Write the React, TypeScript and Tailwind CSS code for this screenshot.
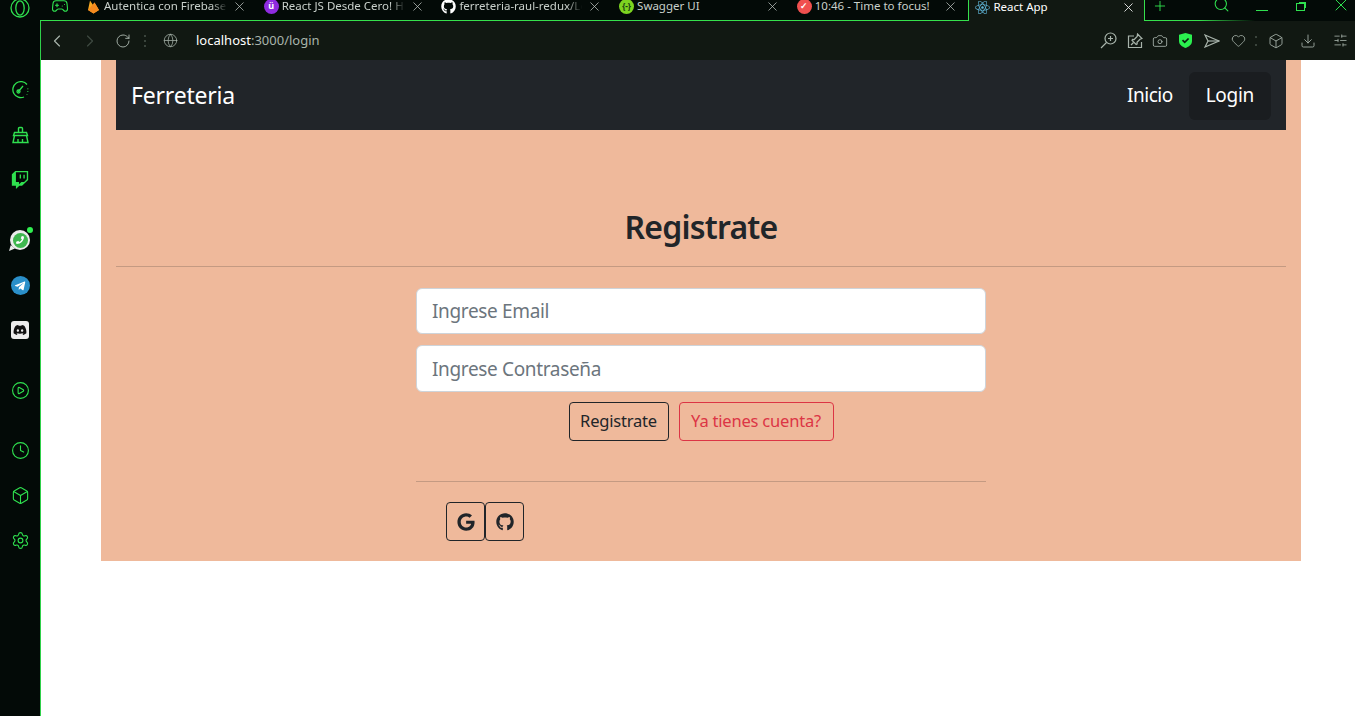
import type { ReactNode } from "react";
import { FaDiscord, FaGithub, FaGoogle, FaPhoneAlt, FaReact, FaTelegramPlane, FaTwitch } from "react-icons/fa";
import {
  Box,
  Camera,
  ChevronLeft,
  ChevronRight,
  CirclePlay,
  Clock,
  Download,
  Gamepad2,
  Globe,
  Heart,
  Plus,
  RotateCw,
  Search,
  Settings,
  SlidersHorizontal,
  X,
} from "lucide-react";

const OperaLogo = () => (
  <svg width="20" height="20" viewBox="0 0 20 20" fill="none" stroke="#2fe04f" strokeWidth="1.3">
    <circle cx="10" cy="10" r="9" />
    <ellipse cx="10" cy="10" rx="4.2" ry="7.2" />
  </svg>
);

const GaugeIcon = () => (
  <svg width="18" height="18" viewBox="0 0 18 18" fill="none" stroke="#2fe04f" strokeWidth="1.3">
    <path d="M16 3.500A8 8 0 1 0 13 16" />
    <path d="M7 11 12 5" />
    <circle cx="7.500" cy="10.500" r="1.500" />
    <path d="M16.800 7.500v.8M16.800 10v.8M16 13v.6" />
  </svg>
);

const BroomIcon = () => (
  <svg width="17" height="18" viewBox="0 0 17 18" fill="none" stroke="#2fe04f" strokeWidth="1.4">
    <path d="M6.500 6V2.500a1 1 0 0 1 1-1h2a1 1 0 0 1 1 1V6" />
    <path d="M2.500 6.500h12l1 3H1.500z" />
    <path d="M2.500 9.500 1 16.500h15l-1.500-7" />
    <path d="M6 16v-3M10.500 16v-3" />
  </svg>
);

const ZoomGlyph = () => (
  <svg width="17" height="17" viewBox="0 0 17 17" fill="none" stroke="currentColor" strokeWidth="1.2">
    <circle cx="10.500" cy="6.500" r="5.500" />
    <path d="M6.500 10.500 1 16M10.500 4v5M8 6.500h5" />
  </svg>
);

const PinGlyph = () => (
  <svg width="16" height="16" viewBox="0 0 16 16" fill="none" stroke="currentColor" strokeWidth="1.2">
    <path d="M7 3H1.500v11.500H14.500V9" />
    <path d="M10.500 1 15 5.500l-2 .8-3 3 .2 1.700-1 .5L5 7.300l.5-1 1.700.2 3-3z" />
    <path d="M6.500 9.500 4 12" />
  </svg>
);

const SendGlyph = () => (
  <svg width="16" height="14" viewBox="0 0 16 14" fill="none" stroke="currentColor" strokeWidth="1.2">
    <path d="M1 1 15 7 1 13 4 7z" />
    <path d="M4 7h11" />
  </svg>
);

const Shield = () => (
  <svg width="13" height="15" viewBox="0 0 13 15">
    <path d="M6.500 0 13 1.800V8c0 3.500-3 5.700-6.500 7C3 13.700 0 11.500 0 8V1.800z" fill="#2bf04f" />
    <path d="M3.500 7.200 5.700 9.400 9.600 5.500" fill="none" stroke="#0c1a10" strokeWidth="1.700" />
  </svg>
);

const FirebaseFlame = () => (
  <svg width="13" height="15" viewBox="0 0 13 15" className="shrink-0 mx-[1px]">
    <path d="M1 11 3 1.500 6 6 7.500 3.500 12 11 6.500 14.500z" fill="#f6a821" />
    <path d="M1 11 7.500 3.500 12 11 6.500 14.500z" fill="#f58a1f" />
  </svg>
);

const TabGlyph = ({ color, children }: { color: string; children: ReactNode }) => (
  <span className="w-[15px] h-[15px] rounded-full flex items-center justify-center text-white text-[9px] font-bold shrink-0" style={{ background: color }}>
    {children}
  </span>
);

const tabs = [
  { title: "Autentica con Firebase", fade: true, icon: <FirebaseFlame /> },
  { title: "React JS Desde Cero! H", fade: true, icon: <TabGlyph color="#8f2be0">ü</TabGlyph> },
  { title: "ferreteria-raul-redux/Lo", fade: true, icon: <FaGithub size={15} color="#ffffff" className="shrink-0" /> },
  { title: "Swagger UI", fade: false, icon: <TabGlyph color="#7dd420"><span className="text-[#173a10] text-[8px]">{"{-}"}</span></TabGlyph> },
  { title: "10:46 - Time to focus!", fade: false, icon: <TabGlyph color="#f0504f">✓</TabGlyph> },
];

export default function App() {
  return (
    <div className="flex h-[716px] w-[1355px] overflow-hidden bg-white font-['Noto_Sans',sans-serif]">
      {/* side panel */}
      <aside className="w-[40px] shrink-0 bg-[#030a07] flex flex-col items-center text-[#2fe04f]">
        <div className="mt-[-2px]">
          <OperaLogo />
        </div>
        <div className="mt-[63px] h-[18px]"><GaugeIcon /></div>
        <div className="mt-[27px]"><BroomIcon /></div>
        <div className="mt-[27px] h-[18px]"><FaTwitch size={18} color="#2fe04f" /></div>
        <div className="relative mt-[41px] flex h-[20px] w-[20px] items-center justify-center rounded-full bg-[#ececec]">
          <span className="absolute bottom-[-1px] left-[-1px] h-[6px] w-[6px] bg-[#ececec] [clip-path:polygon(0_100%,30%_0,100%_60%)]" />
          <span className="flex h-[15px] w-[15px] items-center justify-center rounded-full bg-[#3fb74f]">
            <FaPhoneAlt size={8} color="#ffffff" className="-scale-x-100" />
          </span>
          <span className="absolute right-[-3px] top-[-3px] h-[6px] w-[6px] rounded-full bg-[#30f050]" />
        </div>
        <div className="mt-[26px] flex h-[19px] w-[19px] items-center justify-center rounded-full bg-[#2a8fc9]">
          <FaTelegramPlane size={12} color="#ffffff" />
        </div>
        <div className="mt-[26px] flex h-[18px] w-[18px] items-center justify-center rounded-[3px] bg-[#ececec]">
          <FaDiscord size={14} color="#111111" />
        </div>
        <div className="mt-[42px]"><CirclePlay size={19} strokeWidth={1.4} /></div>
        <div className="mt-[41px]"><Clock size={19} strokeWidth={1.4} /></div>
        <div className="mt-[26px]"><Box size={19} strokeWidth={1.4} /></div>
        <div className="mt-[26px]"><Settings size={19} strokeWidth={1.4} /></div>
      </aside>

      <div className="flex-1 min-w-0 flex flex-col">
        {/* tab strip */}
        <div className="h-[21px] shrink-0 bg-[#030a07] flex items-stretch">
          <div className="flex flex-1 items-start border-b border-r border-[#35e04c] relative">
            <div className="w-[40px] shrink-0 flex justify-center pl-[-2px] mt-[-3px] text-[#2fe04f]">
              <Gamepad2 size={18} strokeWidth={1.5} />
            </div>
            {tabs.map((tab) => (
              <div key={tab.title} className="w-[177.7px] shrink-0 h-[14px] flex items-center pl-[6px] text-[#c9d0cb] text-[11.500px] leading-[14px] mt-[-1px]">
                {tab.icon}
                <span className={`ml-[3px] w-[127px] shrink-0 whitespace-nowrap ${tab.fade ? "[mask-image:linear-gradient(90deg,#000_85%,transparent_97%)]" : ""}`}>{tab.title}</span>
                <X size={15} strokeWidth={1.2} className="ml-[1px] shrink-0 text-[#bfc6c1]" />
              </div>
            ))}
          </div>
          <div className="w-[175px] shrink-0 bg-[#111812] flex items-start pl-[6px] text-white text-[11.500px] leading-[14px]">
            <FaReact size={15} color="#5fb5d8" className="shrink-0" />
            <span className="ml-[3px] w-[127px] shrink-0">React App</span>
            <X size={15} strokeWidth={1.4} className="ml-[1px] shrink-0 text-[#f0f0f0]" />
          </div>
          <div className="relative w-[213px] shrink-0 flex items-start border-l border-[#35e04c] text-[#2fe04f]">
            <Plus size={16} strokeWidth={1.4} className="ml-[7px] mt-[-2px]" />
            <Search size={17} strokeWidth={1.5} className="ml-[45px] mt-[-4px]" />
            <span className="ml-[26px] mt-[10px] h-[1px] w-[12px] bg-[#2fe04f]" />
            <span className="ml-[28px] mt-[3px] h-[8px] w-[9px] border border-[#2fe04f] shadow-[2px_-2px_0_-1px_#2fe04f]" />
            <X size={20} strokeWidth={1.2} className="ml-[26px] mt-[-5px]" />
            <span className="absolute bottom-0 left-0 h-[1px] w-[110px] bg-gradient-to-r from-[#35e04c] via-[#35e04c] to-transparent" />
          </div>
        </div>

        <div className="flex-1 flex flex-col border-l border-[#2fd04a]">
          {/* address bar */}
          <div className="h-[39px] bg-[#111812] flex items-center text-[#a8b4ab] shrink-0">
            <ChevronLeft size={20} strokeWidth={1.4} className="ml-[6px]" />
            <ChevronRight size={20} strokeWidth={1.4} className="ml-[13px] text-[#3f4a42]" />
            <RotateCw size={16} strokeWidth={1.4} className="ml-[15px]" />
            <span className="ml-[13px] flex h-[12px] w-[2px] flex-col justify-between">
              <i className="h-[2px] w-[2px] bg-[#3a443c]" />
              <i className="h-[2px] w-[2px] bg-[#3a443c]" />
              <i className="h-[2px] w-[2px] bg-[#3a443c]" />
            </span>
            <Globe size={15} strokeWidth={1.2} className="ml-[17px]" />
            <div className="ml-[18px] text-[13px] text-[#a8b4ab]">
              <span className="text-white">localhost</span>:3000/login
            </div>
            <div className="ml-auto flex items-center mr-[7px]">
              <ZoomGlyph />
              <span className="ml-[10px]"><PinGlyph /></span>
              <Camera size={16} strokeWidth={1.3} className="ml-[9px]" />
              <span className="ml-[11px]"><Shield /></span>
              <span className="ml-[12px]"><SendGlyph /></span>
              <Heart size={15} strokeWidth={1.3} className="ml-[11px]" />
              <span className="ml-[9px] h-[10px] w-[2px] border-y-[2px] border-[#3a443c]" />
              <Box size={16} strokeWidth={1.3} className="ml-[11px]" />
              <Download size={16} strokeWidth={1.3} className="ml-[16px]" />
              <SlidersHorizontal size={15} strokeWidth={1.3} className="ml-[17px]" />
            </div>
          </div>

          {/* page */}
          <div className="ml-[60px] w-[1200px] h-[501px] bg-[#efb99b] px-[15px] text-[#212529]">
            <nav className="h-[70px] bg-[#212529] flex items-center justify-between px-[15px] pt-[1px] text-white">
              <span className="text-[23px] tracking-[-0.2px]">Ferreteria</span>
              <div className="flex items-center gap-[1px] text-[19px] tracking-[-0.3px]">
                <a className="px-[15px] py-[10px] tracking-[-0.5px]">Inicio</a>
                <a className="h-[48px] px-[17px] flex items-center rounded-[6px] bg-[#1a1d20]">Login</a>
              </div>
            </nav>

            <h1 className="mt-[73px] text-center text-[32px] leading-[48px] font-semibold tracking-[-0.8px]">Registrate</h1>
            <hr className="mt-[15px] border-t border-[#c49a82]" />

            <form className="w-[570px] mx-auto mt-[21px]">
              <input
                placeholder="Ingrese Email"
                className="w-full h-[46px] rounded-[6px] border border-[#ced4da] bg-white px-[15px] text-[19px] tracking-[-0.35px] placeholder:text-[#6c757d] block"
              />
              <input
                placeholder="Ingrese Contraseña"
                className="mt-[11px] w-full h-[47px] rounded-[6px] border border-[#ced4da] bg-white px-[15px] text-[19px] tracking-[-0.35px] placeholder:text-[#6c757d] block"
              />
              <div className="mt-[10px] flex justify-center gap-[10px] text-[16.500px] tracking-[-0.2px]">
                <button type="button" className="h-[39px] w-[100px] rounded-[4px] border border-[#212529]">Registrate</button>
                <button type="button" className="h-[39px] w-[155px] rounded-[4px] border border-[#dc3545] text-[#dc3545]">Ya tienes cuenta?</button>
              </div>
              <hr className="mt-[40px] border-t border-[#c49a82]" />
              <div className="mt-[20px] ml-[30px] flex">
                <button type="button" className="h-[39px] w-[39px] rounded-[4px] border border-[#212529] flex items-center justify-center">
                  <FaGoogle size={18} />
                </button>
                <button type="button" className="h-[39px] w-[39px] rounded-[4px] border border-[#212529] flex items-center justify-center">
                  <FaGithub size={18} />
                </button>
              </div>
            </form>
          </div>
        </div>
      </div>
    </div>
  );
}
